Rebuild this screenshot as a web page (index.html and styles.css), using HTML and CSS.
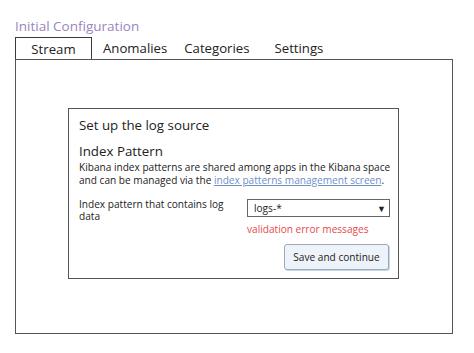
FILE: index.html
```html
<!DOCTYPE html>
<html>
<head>
<meta charset="utf-8">
<link rel="stylesheet" href="styles.css">
</head>
<body>
<div class="page">
  <div class="title">Initial Configuration</div>
  <div class="tabs">
    <div class="tab active">Stream</div>
    <div class="tab t-anom">Anomalies</div>
    <div class="tab t-cat">Categories</div>
    <div class="tab t-set">Settings</div>
  </div>
  <div class="panel">
    <div class="dialog">
      <div class="heading">Set up the log source</div>
      <div class="subheading">Index Pattern</div>
      <p class="desc"><span class="line1">Kibana index patterns are shared among apps in the Kibana space</span>and can be managed via the <a class="link">index patterns management screen</a>.</p>
      <div class="field">
        <div class="label">Index pattern that contains log data</div>
        <div class="control">
          <div class="select"><span>logs-*</span><span class="arrow">▼</span></div>
          <div class="error">validation error messages</div>
        </div>
      </div>
      <div class="actions">
        <div class="button">Save and continue</div>
      </div>
    </div>
  </div>
</div>
</body>
</html>
```

FILE: styles.css
```css
* { box-sizing: border-box; }
html, body { margin: 0; padding: 0; background: #fff; }
body { font-family: "Open Sans", "Noto Sans", sans-serif; color: #222; }
.page { padding: 16px 0 0 15px; width: 453px; }
.title { font-size: 13.5px; line-height: 20px; color: #9c84c0; height: 21px; }
.tabs { display: flex; height: 22px; align-items: stretch; }
.tab { font-size: 13.2px; line-height: 20px; padding-top: 1px; }
.tab.active { width: 77px; border: 1px solid #3a3a3a; border-bottom: none; text-align: center; background: #fff; }
.t-anom { margin-left: 11px; }
.t-cat { margin-left: 17px; }
.t-set { margin-left: 25px; }
.panel { border: 1.5px solid #555; width: 438px; height: 275px; padding: 48px 0 0 52px; }
.dialog { width: 331px; height: 171px; border: 1.5px solid #555; padding: 6px 8px 0 10px; }
.heading { font-size: 13.3px; line-height: 20px; }
.subheading { font-size: 13.3px; line-height: 20px; margin-top: 6px; }
.desc { font-size: 10.1px; line-height: 13px; margin: 0; }
.line1 { display: block; white-space: nowrap; }
.link { color: #6f8fc9; text-decoration: underline; }
.field { display: flex; margin-top: 11px; }
.label { font-size: 10.1px; line-height: 12px; width: 168px; }
.control { width: 143px; }
.select { height: 18px; margin-top: 1px; border: 1px solid #666; display: flex; justify-content: space-between; align-items: center; font-size: 10.1px; padding: 0 3px 0 6px; }
.arrow { font-size: 9px; }
.error { font-size: 10.1px; line-height: 14px; color: #e8484a; margin-top: 5px; }
.actions { display: flex; justify-content: flex-end; margin-top: 8px; padding-right: 1px; }
.button { width: 105px; height: 26px; border: 1px solid #9aa8c0; border-radius: 3px; background: #eef2f9; font-size: 10.1px; line-height: 24px; text-align: center; box-shadow: 1px 1px 0 #c9d3e3; }
```
